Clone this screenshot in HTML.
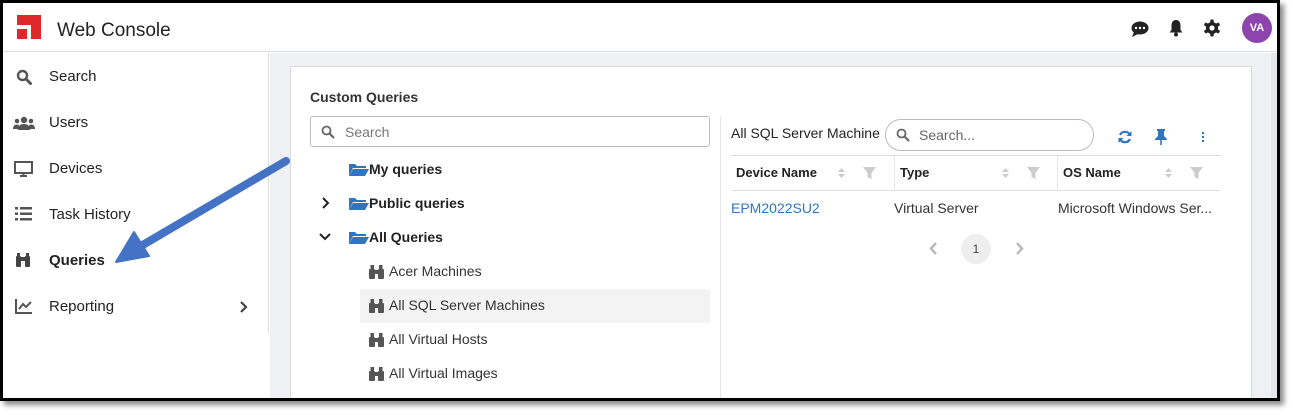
<!DOCTYPE html>
<html><head><style>
*{box-sizing:border-box;margin:0;padding:0}
body{width:1293px;height:415px;background:#fff;font-family:"Liberation Sans",sans-serif;position:relative;overflow:hidden;color:#222}
.frame{position:absolute;left:0;top:0;width:1280px;height:401px;border:3px solid #000;background:#fff;overflow:hidden;box-shadow:4px 4px 5px rgba(0,0,0,.45)}
.abs{position:absolute}
.nav{font-size:15px;color:#222}
.nav div{position:absolute;left:46px}
.ic{position:absolute;left:12px;color:#555;font-size:15px}
.tree{font-size:14px}
</style></head><body>
<div class="frame">
 <!-- header -->
 <div class="abs" style="left:0;top:0;width:1274px;height:49px;border-bottom:1px solid #ddd;background:#fff"></div>
 <svg class="abs" style="left:14px;top:12px" width="24" height="24"><path d="M0 0H24V24H14V10H0Z" fill="#e0282a"/><rect x="0" y="14" width="10" height="10" fill="#e0282a"/></svg>
 <div class="abs" style="left:54px;top:17px;font-size:19px;color:#222">Web Console</div>
 <svg class="abs" style="left:1128px;top:18px" width="18" height="16"><ellipse cx="9" cy="7" rx="8.5" ry="6.5" fill="#222"/><path d="M3 11L1 16L7 13Z" fill="#222"/><circle cx="5" cy="7" r="1.2" fill="#fff"/><circle cx="9" cy="7" r="1.2" fill="#fff"/><circle cx="13" cy="7" r="1.2" fill="#fff"/></svg>
 <svg class="abs" style="left:1165px;top:16px" width="16" height="18"><path d="M8 1C4.5 1 3.5 4 3.5 7V11L1.5 13.5H14.5L12.5 11V7C12.5 4 11.5 1 8 1Z" fill="#222"/><circle cx="8" cy="15.5" r="2" fill="#222"/></svg>
 <svg class="abs" style="left:1200px;top:16px" width="18" height="18" viewBox="0 0 18 18"><g fill="#222"><circle cx="9" cy="9" r="6"/><rect x="7.3" y="0.5" width="3.4" height="17" rx="1"/><rect x="7.3" y="0.5" width="3.4" height="17" rx="1" transform="rotate(60 9 9)"/><rect x="7.3" y="0.5" width="3.4" height="17" rx="1" transform="rotate(120 9 9)"/></g><circle cx="9" cy="9" r="2.6" fill="#fff"/></svg>
 <div class="abs" style="left:1239px;top:10px;width:30px;height:30px;border-radius:50%;background:#8e44ad;color:#fff;font-size:11px;font-weight:bold;text-align:center;line-height:30px">VA</div>
 <!-- sidebar -->
 <div class="abs" style="left:0;top:50px;width:266px;height:280px;border-right:1px solid #ddd;background:#fff"></div>
 <div class="nav">
  <svg class="abs" style="left:13px;top:66px" width="16" height="16"><circle cx="6.5" cy="6.5" r="4.5" stroke="#555" stroke-width="2.4" fill="none"/><path d="M10 10L14.5 14.5" stroke="#555" stroke-width="3" stroke-linecap="round"/></svg>
  <div style="top:65px">Search</div>
  <svg class="abs" style="left:10px;top:113px" width="22" height="14"><circle cx="11" cy="4" r="3.2" fill="#555"/><circle cx="4" cy="5" r="2.3" fill="#555"/><circle cx="18" cy="5" r="2.3" fill="#555"/><path d="M5 14Q5 8 11 8Q17 8 17 14Z" fill="#555"/><path d="M0 13Q0 8.5 4 8.5Q6 8.5 6 10V13Z" fill="#555"/><path d="M22 13Q22 8.5 18 8.5Q16 8.5 16 10V13Z" fill="#555"/></svg>
  <div style="top:111px">Users</div>
  <svg class="abs" style="left:11px;top:158px" width="19" height="17"><rect x="1" y="1" width="17" height="11" stroke="#555" stroke-width="2" fill="none"/><rect x="6" y="14" width="7" height="2" fill="#555"/><rect x="8.5" y="12" width="2" height="3" fill="#555"/></svg>
  <div style="top:157px">Devices</div>
  <svg class="abs" style="left:12px;top:204px" width="17" height="14"><g fill="#555"><rect x="0" y="0" width="3" height="2.5"/><rect x="0" y="5.5" width="3" height="2.5"/><rect x="0" y="11" width="3" height="2.5"/><rect x="5" y="0" width="12" height="2.5"/><rect x="5" y="5.5" width="12" height="2.5"/><rect x="5" y="11" width="12" height="2.5"/></g></svg>
  <div style="top:203px">Task History</div>
  <svg class="abs" style="left:12px;top:250px" width="16" height="14"><g fill="#444"><rect x="1" y="3" width="5" height="11" rx="1"/><rect x="10" y="3" width="5" height="11" rx="1"/><rect x="2" y="0" width="3" height="4"/><rect x="11" y="0" width="3" height="4"/><rect x="5" y="4" width="6" height="4"/></g></svg>
  <div style="top:249px;font-weight:bold">Queries</div>
  <svg class="abs" style="left:12px;top:296px" width="18" height="15"><path d="M1 0V14H17" stroke="#555" stroke-width="2" fill="none"/><path d="M4 10L8 5L11 8L16 3" stroke="#555" stroke-width="2" fill="none"/></svg>
  <div style="top:295px">Reporting</div>
  <svg class="abs" style="left:236px;top:298px" width="10" height="12"><path d="M2 1L7 6L2 11" stroke="#444" stroke-width="2.2" fill="none"/></svg>
 </div>
 <!-- main gray -->
 <div class="abs" style="left:267px;top:50px;width:1007px;height:350px;background:#eef0f3"></div>
 <div class="abs" style="left:1268px;top:50px;width:6px;height:350px;background:#e4e6ea"></div>
 <!-- card -->
 <div class="abs" style="left:287px;top:63px;width:962px;height:340px;background:#fff;border:1px solid #d8d8d8"></div>
 <div class="abs" style="left:307px;top:86px;font-size:14px;font-weight:bold;color:#333">Custom Queries</div>
 <div class="abs" style="left:307px;top:113px;width:400px;height:31px;border:1px solid #bbb;border-radius:3px"></div>
 <svg class="abs" style="left:318px;top:122px" width="14" height="14"><circle cx="5.5" cy="5.5" r="4" stroke="#666" stroke-width="1.8" fill="none"/><path d="M8.5 8.5L13 13" stroke="#666" stroke-width="2.2"/></svg>
 <div class="abs" style="left:342px;top:121px;font-size:14px;color:#777">Search</div>
 <div class="tree">
  <svg class="abs" style="left:346px;top:160px" width="20" height="14"><path d="M0 1H6L8 3H17V5H4L0 13Z" fill="#2f75c0"/><path d="M4 6H20L16 13H0Z" fill="#2f75c0"/></svg>
  <div class="abs" style="left:366px;top:158px;font-weight:bold">My queries</div>
  <svg class="abs" style="left:318px;top:194px" width="10" height="12"><path d="M2 1L7 6L2 11" stroke="#222" stroke-width="2" fill="none"/></svg>
  <svg class="abs" style="left:346px;top:194px" width="20" height="14"><path d="M0 1H6L8 3H17V5H4L0 13Z" fill="#2f75c0"/><path d="M4 6H20L16 13H0Z" fill="#2f75c0"/></svg>
  <div class="abs" style="left:366px;top:192px;font-weight:bold">Public queries</div>
  <svg class="abs" style="left:316px;top:229px" width="12" height="10"><path d="M1 2L6 7L11 2" stroke="#222" stroke-width="2" fill="none"/></svg>
  <svg class="abs" style="left:346px;top:228px" width="20" height="14"><path d="M0 1H6L8 3H17V5H4L0 13Z" fill="#2f75c0"/><path d="M4 6H20L16 13H0Z" fill="#2f75c0"/></svg>
  <div class="abs" style="left:366px;top:226px;font-weight:bold">All Queries</div>
  <div class="abs" style="left:357px;top:286px;width:350px;height:34px;background:#f3f3f3"></div>
  <div class="abs" style="left:366px;top:260px;color:#333">&#8203;</div>
 </div>
 <div class="tree" style="color:#333">
  <div class="abs" style="left:386px;top:260px">Acer Machines</div>
  <div class="abs" style="left:386px;top:294px">All SQL Server Machines</div>
  <div class="abs" style="left:386px;top:328px">All Virtual Hosts</div>
  <div class="abs" style="left:386px;top:362px">All Virtual Images</div>
 </div>
 <svg width="0" height="0" style="position:absolute"><defs><g id="bn"><rect x="0" y="4" width="6" height="10" rx="1" fill="#555"/><rect x="9" y="4" width="6" height="10" rx="1" fill="#555"/><rect x="1.5" y="0" width="3.5" height="5" fill="#555"/><rect x="10" y="0" width="3.5" height="5" fill="#555"/><rect x="5" y="5" width="5" height="4" fill="#555"/></g></defs></svg>
 <svg class="abs" style="left:366px;top:262px" width="15" height="14"><use href="#bn"/></svg>
 <svg class="abs" style="left:366px;top:296px" width="15" height="14"><use href="#bn"/></svg>
 <svg class="abs" style="left:366px;top:330px" width="15" height="14"><use href="#bn"/></svg>
 <svg class="abs" style="left:366px;top:364px" width="15" height="14"><use href="#bn"/></svg>
 <!-- divider -->
 <div class="abs" style="left:717px;top:113px;width:1px;height:290px;background:#e6e6e6"></div>
 <!-- right grid -->
 <div class="abs" style="left:728px;top:122px;font-size:14px;color:#222">All SQL Server Machine</div>
 <div class="abs" style="left:882px;top:116px;width:209px;height:32px;border:1px solid #bbb;border-radius:16px;background:#fff"></div>
 <svg class="abs" style="left:893px;top:125px" width="14" height="14"><circle cx="5.5" cy="5.5" r="4" stroke="#666" stroke-width="1.8" fill="none"/><path d="M8.5 8.5L13 13" stroke="#666" stroke-width="2.2"/></svg>
 <div class="abs" style="left:916px;top:124px;font-size:14px;color:#666">Search...</div>
 <svg class="abs" style="left:1115px;top:127px" width="14" height="14"><path d="M12 5A5.5 5.5 0 0 0 2 5" stroke="#2f75c0" stroke-width="2.2" fill="none"/><path d="M13.5 1V6H8.5Z" fill="#2f75c0"/><path d="M2 9A5.5 5.5 0 0 0 12 9" stroke="#2f75c0" stroke-width="2.2" fill="none"/><path d="M0.5 13V8H5.5Z" fill="#2f75c0"/></svg>
 <svg class="abs" style="left:1151px;top:126px" width="14" height="16"><path d="M3 0H11V2H10V7L13 10V11H1V10L4 7V2H3Z" fill="#2f75c0"/><rect x="6.2" y="11" width="1.6" height="5" fill="#2f75c0"/></svg>
 <div class="abs" style="left:1199px;top:129px;width:2px;height:10px;background:repeating-linear-gradient(#2f75c0 0 2px,transparent 2px 4px)"></div>
 <div class="abs" style="left:728px;top:152px;width:490px;height:1px;background:#ddd"></div>
 <div class="abs" style="left:728px;top:187px;width:490px;height:1px;background:#ddd"></div>
 <div class="abs" style="left:891px;top:153px;width:1px;height:34px;background:#e6e6e6"></div>
 <div class="abs" style="left:1054px;top:153px;width:1px;height:34px;background:#e6e6e6"></div>
 <div class="abs" style="left:733px;top:162px;font-size:13px;font-weight:bold;color:#222">Device Name</div>
 <div class="abs" style="left:897px;top:162px;font-size:13px;font-weight:bold;color:#222">Type</div>
 <div class="abs" style="left:1060px;top:162px;font-size:13px;font-weight:bold;color:#222">OS Name</div>
 <svg width="0" height="0" style="position:absolute"><defs><g id="sf"><path d="M0 5L3.5 1L7 5Z M0 7L3.5 11L7 7Z" fill="#ccc"/><path d="M25 0H38L33.5 6V12L29.5 10V6Z" fill="#ccc"/></g></defs></svg>
 <svg class="abs" style="left:835px;top:164px" width="40" height="13"><use href="#sf"/></svg>
 <svg class="abs" style="left:999px;top:164px" width="40" height="13"><use href="#sf"/></svg>
 <svg class="abs" style="left:1162px;top:164px" width="40" height="13"><use href="#sf"/></svg>
 <div class="abs" style="left:728px;top:197px;font-size:14px;color:#2f75c0">EPM2022SU2</div>
 <div class="abs" style="left:891px;top:197px;font-size:14px;color:#333">Virtual Server</div>
 <div class="abs" style="left:1055px;top:197px;font-size:14px;color:#333">Microsoft Windows Ser...</div>
 <svg class="abs" style="left:926px;top:239px" width="10" height="13"><path d="M7 1L2 6.5L7 12" stroke="#bbb" stroke-width="2.5" fill="none"/></svg>
 <div class="abs" style="left:958px;top:231px;width:30px;height:30px;border-radius:50%;background:#eee;font-size:12px;color:#444;text-align:center;line-height:30px">1</div>
 <svg class="abs" style="left:1011px;top:239px" width="10" height="13"><path d="M3 1L8 6.5L3 12" stroke="#bbb" stroke-width="2.5" fill="none"/></svg>
 <!-- arrow -->
 <svg class="abs" style="left:0;top:0" width="300" height="300"><path d="M283 158L138 243" stroke="#4472c4" stroke-width="8" stroke-linecap="round"/><path d="M113 259L131 229L146 253Z" fill="#4472c4" stroke="#4472c4" stroke-width="2" stroke-linejoin="round"/></svg>
</div>
</body></html>
